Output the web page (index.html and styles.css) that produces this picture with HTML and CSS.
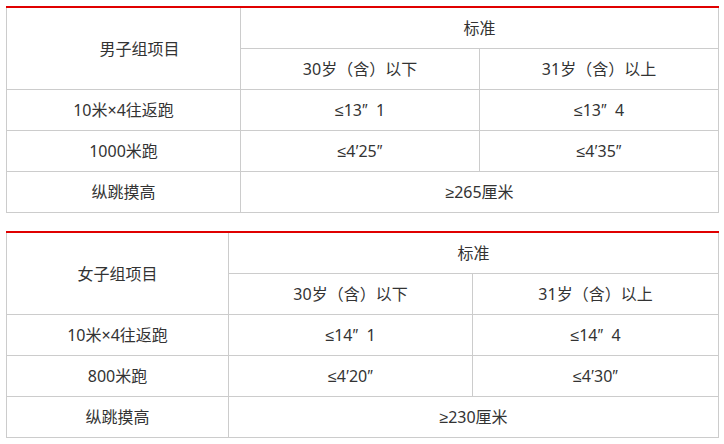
FILE: index.html
```html
<!DOCTYPE html>
<html lang="zh-CN">
<head>
<meta charset="utf-8">
<link rel="stylesheet" href="styles.css">
</head>
<body>
<table class="std std-men">
  <colgroup><col class="c1"><col class="c2"><col class="c3"></colgroup>
  <tr><td rowspan="2"><span class="lead">男子组项目</span></td><td colspan="2">标准</td></tr>
  <tr><td>30岁（含）以下</td><td>31岁（含）以上</td></tr>
  <tr><td>10米×4往返跑</td><td><span class="sym">≤</span>13<span class="sym">″</span>&nbsp; 1</td><td><span class="sym">≤</span>13<span class="sym">″</span>&nbsp; 4</td></tr>
  <tr><td>1000米跑</td><td><span class="sym">≤</span>4<span class="sym">′</span>25<span class="sym">″</span></td><td><span class="sym">≤</span>4<span class="sym">′</span>35<span class="sym">″</span></td></tr>
  <tr><td>纵跳摸高</td><td colspan="2"><span class="sym">≥</span>265厘米</td></tr>
</table>
<table class="std std-women">
  <colgroup><col class="c1"><col class="c2"><col class="c3"></colgroup>
  <tr><td rowspan="2">女子组项目</td><td colspan="2">标准</td></tr>
  <tr><td>30岁（含）以下</td><td>31岁（含）以上</td></tr>
  <tr><td>10米×4往返跑</td><td><span class="sym">≤</span>14<span class="sym">″</span>&nbsp; 1</td><td><span class="sym">≤</span>14<span class="sym">″</span>&nbsp; 4</td></tr>
  <tr><td>800米跑</td><td><span class="sym">≤</span>4<span class="sym">′</span>20<span class="sym">″</span></td><td><span class="sym">≤</span>4<span class="sym">′</span>30<span class="sym">″</span></td></tr>
  <tr><td>纵跳摸高</td><td colspan="2"><span class="sym">≥</span>230厘米</td></tr>
</table>
</body>
</html>
```
FILE: styles.css
```css
html, body { margin: 0; padding: 0; background: #fff; }
body {
  padding: 6px 0 0 6px;
  font-family: "Noto Sans", "Noto Sans CJK SC", sans-serif;
  font-size: 16px;
  color: #333;
}
.std {
  border-collapse: collapse;
  table-layout: fixed;
  width: 712px;
  border-top: 2px solid #e00000;
}
.std td {
  border: 1px solid #cccccc;
  height: 40px;
  padding: 0;
  text-align: center;
  vertical-align: middle;
  line-height: 20px;
}
.std tr:first-child td { border-top: 2px solid #e00000; }
.sym { font-family: "Liberation Sans", "DejaVu Sans", sans-serif; }
.lead { padding-left: 32px; }
.std-men .c1 { width: 234px; }
.std-men .c2 { width: 239px; }
.std-men .c3 { width: 239px; }
.std-women { margin-top: 18px; }
.std-women .c1 { width: 222px; }
.std-women .c2 { width: 244px; }
.std-women .c3 { width: 246px; }
```
